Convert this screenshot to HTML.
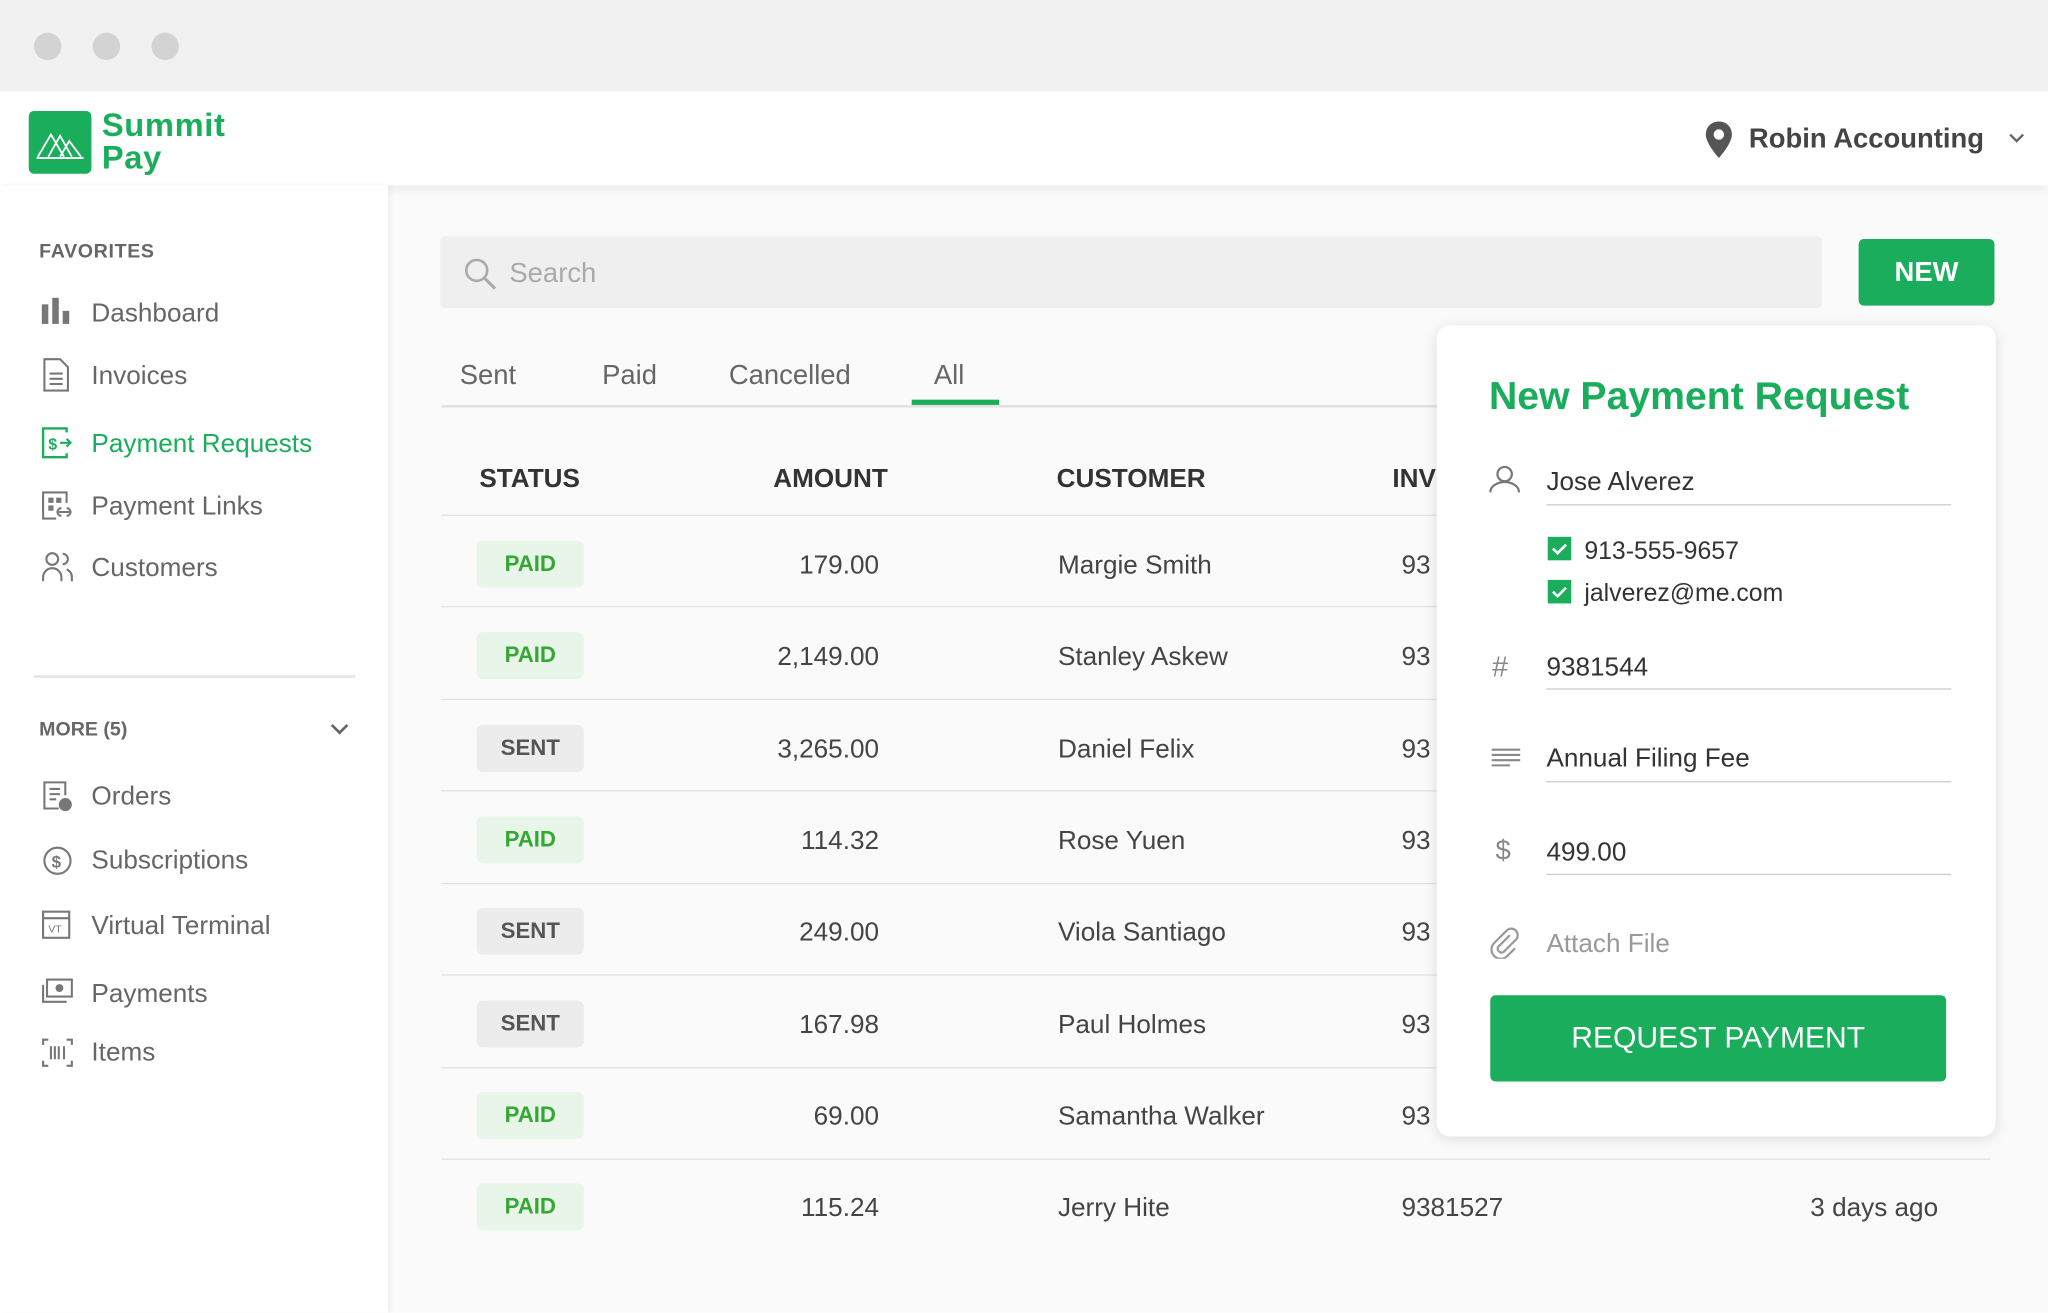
<!DOCTYPE html>
<html><head><meta charset="utf-8"><style>
*{box-sizing:border-box;margin:0;padding:0}
html,body{width:2048px;height:1312px;overflow:hidden;background:#fff;font-family:"Liberation Sans",Roboto,sans-serif}
#s{position:absolute;left:0;top:0;width:1568px;height:1005px;transform:scale(1.306122);transform-origin:0 0;background:#fafafa}
.a{position:absolute;white-space:nowrap}
.top{left:0;top:0;width:1568px;height:70px;background:#f1f1f1}
.dot{width:21px;height:21px;border-radius:50%;background:#d3d3d3;top:25px}
.hdr{left:0;top:70px;width:1568px;height:72px;background:#fff;box-shadow:0 3px 6px rgba(0,0,0,.06)}
.side{left:0;top:142px;width:297px;height:863px;background:#fff;box-shadow:2px 0 4px rgba(0,0,0,.05)}
.nav{left:70px;font-size:20px;color:#666;margin-top:2px}
.ic{left:31px}
.g{color:#1aad5c}
.th{top:356px;font-size:20px;font-weight:bold;color:#333}
.badge{left:365px;width:82px;height:36px;border-radius:5px;font-size:17px;font-weight:bold;text-align:center;line-height:36px;margin-top:1px}
.paid{background:#e8f6e9;color:#35a733}
.sent{background:#ececec;color:#555}
.cell{font-size:20px;color:#444;margin-top:2px}
.amt{width:200px;left:473px;text-align:right}
.sep{left:338px;width:1186px;height:1px;background:#e2e2e2}
.ln{left:1184px;width:310px;height:1px;background:#ccc}
.tab{top:276px;font-size:21px;color:#666}
</style></head><body><div id="s">
<div class="a top"></div>
<div class="a dot" style="left:26px"></div><div class="a dot" style="left:71px"></div><div class="a dot" style="left:116px"></div>
<div class="a hdr"></div>
<div class="a" style="left:22px;top:85px;width:48px;height:48px;background:#1aad5c;border-radius:4px">
<svg width="48" height="48" viewBox="0 0 48 48"><path d="M7 35 L17 18 L27 35 M15 35 L24 19 L33 35 M24 35 L31 23 L40 35 M6 36 H42" stroke="#fff" stroke-width="1.4" fill="none"/></svg></div>
<div class="a g" style="left:78px;top:84px;font-size:25px;font-weight:bold;line-height:25px;letter-spacing:.5px">Summit<br>Pay</div>
<svg class="a" style="left:1305px;top:92px" width="22" height="30" viewBox="0 0 22 30"><path d="M11 1C5 1 1 5.5 1 11c0 7 10 18 10 18s10-11 10-18C21 5.5 17 1 11 1z" fill="#555"/><circle cx="11" cy="11" r="4" fill="#fff"/></svg>
<div class="a" style="left:1339px;top:95px;font-size:21px;font-weight:bold;color:#444">Robin Accounting</div>
<svg class="a" style="left:1537px;top:101px" width="14" height="10"><path d="M2 2l5 5 5-5" stroke="#666" stroke-width="1.8" fill="none"/></svg>

<div class="a side"></div>
<div class="a" style="left:30px;top:184px;font-size:15px;font-weight:bold;color:#666;letter-spacing:.5px">FAVORITES</div>
<svg class="a ic" style="top:227px" width="24" height="24"><rect x="1" y="6" width="5" height="15" fill="#777"/><rect x="9" y="1" width="5" height="20" fill="#777"/><rect x="17" y="11" width="5" height="10" fill="#777"/></svg>
<div class="a nav" style="top:227px">Dashboard</div>
<svg class="a ic" style="top:274px" width="24" height="26"><path d="M3 1h12l6 6v18H3z" stroke="#777" stroke-width="1.6" fill="none"/><path d="M7 12h10M7 16h10M7 20h10" stroke="#777" stroke-width="1.6"/></svg>
<div class="a nav" style="top:275px">Invoices</div>
<svg class="a ic" style="top:326px" width="26" height="26"><path d="M20 5V2H2v22h18v-3" stroke="#1aad5c" stroke-width="1.8" fill="none"/><text x="6" y="18" font-size="12" font-weight="bold" fill="#1aad5c" font-family="Liberation Sans">$</text><path d="M15 13h8m-3-3l3 3-3 3" stroke="#1aad5c" stroke-width="1.6" fill="none"/></svg>
<div class="a nav g" style="top:327px">Payment Requests</div>
<svg class="a ic" style="top:375px" width="26" height="26"><path d="M12 22H2V2h18v8" stroke="#777" stroke-width="1.6" fill="none"/><rect x="6" y="6" width="4" height="4" fill="#777"/><rect x="12" y="6" width="4" height="4" fill="#777"/><rect x="6" y="12" width="4" height="4" fill="#777"/><path d="M14 17h8M16 14a3 3 0 000 6M20 14a3 3 0 010 6" stroke="#777" stroke-width="1.6" fill="none"/></svg>
<div class="a nav" style="top:375px">Payment Links</div>
<svg class="a ic" style="top:421px" width="26" height="26"><circle cx="9" cy="7" r="4.5" stroke="#777" stroke-width="1.6" fill="none"/><path d="M2 24v-3a7 7 0 0114 0v3M17 3a4 4 0 010 8M20 15a6 6 0 014 6v3" stroke="#777" stroke-width="1.6" fill="none"/></svg>
<div class="a nav" style="top:422px">Customers</div>
<div class="a" style="left:26px;top:517px;width:246px;height:2px;background:#e6e6e6"></div>
<div class="a" style="left:30px;top:550px;font-size:15px;font-weight:bold;color:#666">MORE (5)</div>
<svg class="a" style="left:252px;top:552px" width="16" height="12"><path d="M2 3l6 6 6-6" stroke="#666" stroke-width="2" fill="none"/></svg>
<svg class="a ic" style="top:597px" width="26" height="26"><path d="M14 22H3V2h16v10" stroke="#777" stroke-width="1.6" fill="none"/><path d="M7 7h8M7 11h8M7 15h5" stroke="#777" stroke-width="1.6"/><circle cx="19" cy="19" r="5" fill="#777"/></svg>
<div class="a nav" style="top:597px">Orders</div>
<svg class="a ic" style="top:646px" width="26" height="26"><circle cx="13" cy="13" r="10" stroke="#777" stroke-width="1.6" fill="none"/><text x="8.5" y="18" font-size="13" font-weight="bold" fill="#777" font-family="Liberation Sans">$</text></svg>
<div class="a nav" style="top:646px">Subscriptions</div>
<svg class="a ic" style="top:696px" width="26" height="26"><rect x="2" y="2" width="20" height="20" stroke="#777" stroke-width="1.6" fill="none"/><path d="M2 7h20" stroke="#777" stroke-width="1.6"/><text x="6" y="18" font-size="8" fill="#777" font-family="Liberation Sans">VT</text></svg>
<div class="a nav" style="top:696px">Virtual Terminal</div>
<svg class="a ic" style="top:747px" width="26" height="26"><rect x="5" y="3" width="19" height="13" stroke="#777" stroke-width="1.6" fill="none"/><circle cx="14.5" cy="9.5" r="3" fill="#777"/><path d="M2 7v13h18" stroke="#777" stroke-width="1.6" fill="none"/></svg>
<div class="a nav" style="top:748px">Payments</div>
<svg class="a ic" style="top:793px" width="26" height="26"><path d="M2 7V3h4M20 3h4v4M24 19v4h-4M6 23H2v-4M8 8v10M11 8v10M14 8v10M18 8v10" stroke="#777" stroke-width="1.6" fill="none"/></svg>
<div class="a nav" style="top:793px">Items</div>

<div class="a" style="left:337px;top:181px;width:1058px;height:55px;background:#efefef;border-radius:4px"></div>
<svg class="a" style="left:354px;top:196px" width="28" height="28"><circle cx="11" cy="11" r="8" stroke="#aaa" stroke-width="2" fill="none"/><path d="M17 17l8 8" stroke="#aaa" stroke-width="2.4"/></svg>
<div class="a" style="left:390px;top:198px;font-size:21px;color:#aaa">Search</div>
<div class="a" style="left:1423px;top:183px;width:104px;height:51px;background:#1aad5c;border-radius:4px;color:#fff;font-size:21px;font-weight:bold;text-align:center;line-height:52px">NEW</div>

<div class="a" style="left:338px;top:310px;width:1186px;height:2px;background:#e2e2e2"></div>
<div class="a tab" style="left:352px">Sent</div>
<div class="a tab" style="left:461px">Paid</div>
<div class="a tab" style="left:558px">Cancelled</div>
<div class="a tab g" style="left:715px">All</div>
<div class="a" style="left:698px;top:306px;width:67px;height:4px;background:#1aad5c"></div>

<div class="a th" style="left:367px">STATUS</div>
<div class="a th" style="left:592px">AMOUNT</div>
<div class="a th" style="left:809px">CUSTOMER</div>
<div class="a th" style="left:1066px">INV</div>
<div class="a sep" style="top:394px"></div>

<div class="a badge paid" style="top:413px">PAID</div><div class="a cell amt" style="top:420px">179.00</div><div class="a cell" style="left:810px;top:420px">Margie Smith</div><div class="a cell" style="left:1073px;top:420px">93</div>
<div class="a sep" style="top:464px"></div>
<div class="a badge paid" style="top:483px">PAID</div><div class="a cell amt" style="top:490px">2,149.00</div><div class="a cell" style="left:810px;top:490px">Stanley Askew</div><div class="a cell" style="left:1073px;top:490px">93</div>
<div class="a sep" style="top:535px"></div>
<div class="a badge sent" style="top:554px">SENT</div><div class="a cell amt" style="top:561px">3,265.00</div><div class="a cell" style="left:810px;top:561px">Daniel Felix</div><div class="a cell" style="left:1073px;top:561px">93</div>
<div class="a sep" style="top:605px"></div>
<div class="a badge paid" style="top:624px">PAID</div><div class="a cell amt" style="top:631px">114.32</div><div class="a cell" style="left:810px;top:631px">Rose Yuen</div><div class="a cell" style="left:1073px;top:631px">93</div>
<div class="a sep" style="top:676px"></div>
<div class="a badge sent" style="top:694px">SENT</div><div class="a cell amt" style="top:701px">249.00</div><div class="a cell" style="left:810px;top:701px">Viola Santiago</div><div class="a cell" style="left:1073px;top:701px">93</div>
<div class="a sep" style="top:746px"></div>
<div class="a badge sent" style="top:765px">SENT</div><div class="a cell amt" style="top:772px">167.98</div><div class="a cell" style="left:810px;top:772px">Paul Holmes</div><div class="a cell" style="left:1073px;top:772px">93</div>
<div class="a sep" style="top:817px"></div>
<div class="a badge paid" style="top:835px">PAID</div><div class="a cell amt" style="top:842px">69.00</div><div class="a cell" style="left:810px;top:842px">Samantha Walker</div><div class="a cell" style="left:1073px;top:842px">93</div>
<div class="a sep" style="top:887px"></div>
<div class="a badge paid" style="top:905px">PAID</div><div class="a cell amt" style="top:912px">115.24</div><div class="a cell" style="left:810px;top:912px">Jerry Hite</div><div class="a cell" style="left:1073px;top:912px">9381527</div><div class="a cell" style="left:1386px;top:912px">3 days ago</div>

<div class="a" style="left:1100px;top:249px;width:428px;height:621px;background:#fff;border-radius:10px;box-shadow:0 2px 10px rgba(0,0,0,.12)"></div>
<div class="a g" style="left:1140px;top:287px;font-size:30px;font-weight:bold">New Payment Request</div>
<svg class="a" style="left:1139px;top:356px" width="26" height="22"><circle cx="13" cy="7" r="5.5" stroke="#777" stroke-width="1.7" fill="none"/><path d="M2 21a11 8 0 0122 0" stroke="#777" stroke-width="1.7" fill="none"/></svg>
<div class="a cell" style="left:1184px;top:356px;color:#333">Jose Alverez</div>
<div class="a ln" style="top:386px"></div>
<div class="a" style="left:1185px;top:411px;width:18px;height:18px;background:#1aad5c"><svg width="18" height="18"><path d="M4 9l3.5 3.5L14 6" stroke="#fff" stroke-width="2" fill="none"/></svg></div>
<div class="a cell" style="left:1213px;top:410px;font-size:19px;color:#333">913-555-9657</div>
<div class="a" style="left:1185px;top:444px;width:18px;height:18px;background:#1aad5c"><svg width="18" height="18"><path d="M4 9l3.5 3.5L14 6" stroke="#fff" stroke-width="2" fill="none"/></svg></div>
<div class="a cell" style="left:1213px;top:442px;font-size:19px;color:#333">jalverez@me.com</div>
<div class="a" style="left:1142px;top:498px;font-size:22px;color:#888;font-style:italic">#</div>
<div class="a cell" style="left:1184px;top:498px;color:#333">9381544</div>
<div class="a ln" style="top:527px"></div>
<svg class="a" style="left:1142px;top:572px" width="22" height="16"><path d="M0 2h22M0 6h22M0 10h22M0 14h14" stroke="#888" stroke-width="1.6"/></svg>
<div class="a cell" style="left:1184px;top:568px;color:#333">Annual Filing Fee</div>
<div class="a ln" style="top:598px"></div>
<div class="a" style="left:1145px;top:640px;font-size:21px;color:#888">$</div>
<div class="a cell" style="left:1184px;top:640px;color:#333">499.00</div>
<div class="a ln" style="top:669px"></div>
<svg class="a" style="left:1141px;top:710px" width="22" height="24"><path d="M15 6L6 15a3 3 0 004 4l10-10a5 5 0 00-7-7L3 12a7 7 0 0010 10l6-6" stroke="#999" stroke-width="1.7" fill="none"/></svg>
<div class="a cell" style="left:1184px;top:710px;color:#999">Attach File</div>
<div class="a" style="left:1141px;top:762px;width:349px;height:66px;background:#1aad5c;border-radius:4px;color:#fff;font-size:23px;text-align:center;line-height:64px">REQUEST PAYMENT</div>
</div></body></html>
